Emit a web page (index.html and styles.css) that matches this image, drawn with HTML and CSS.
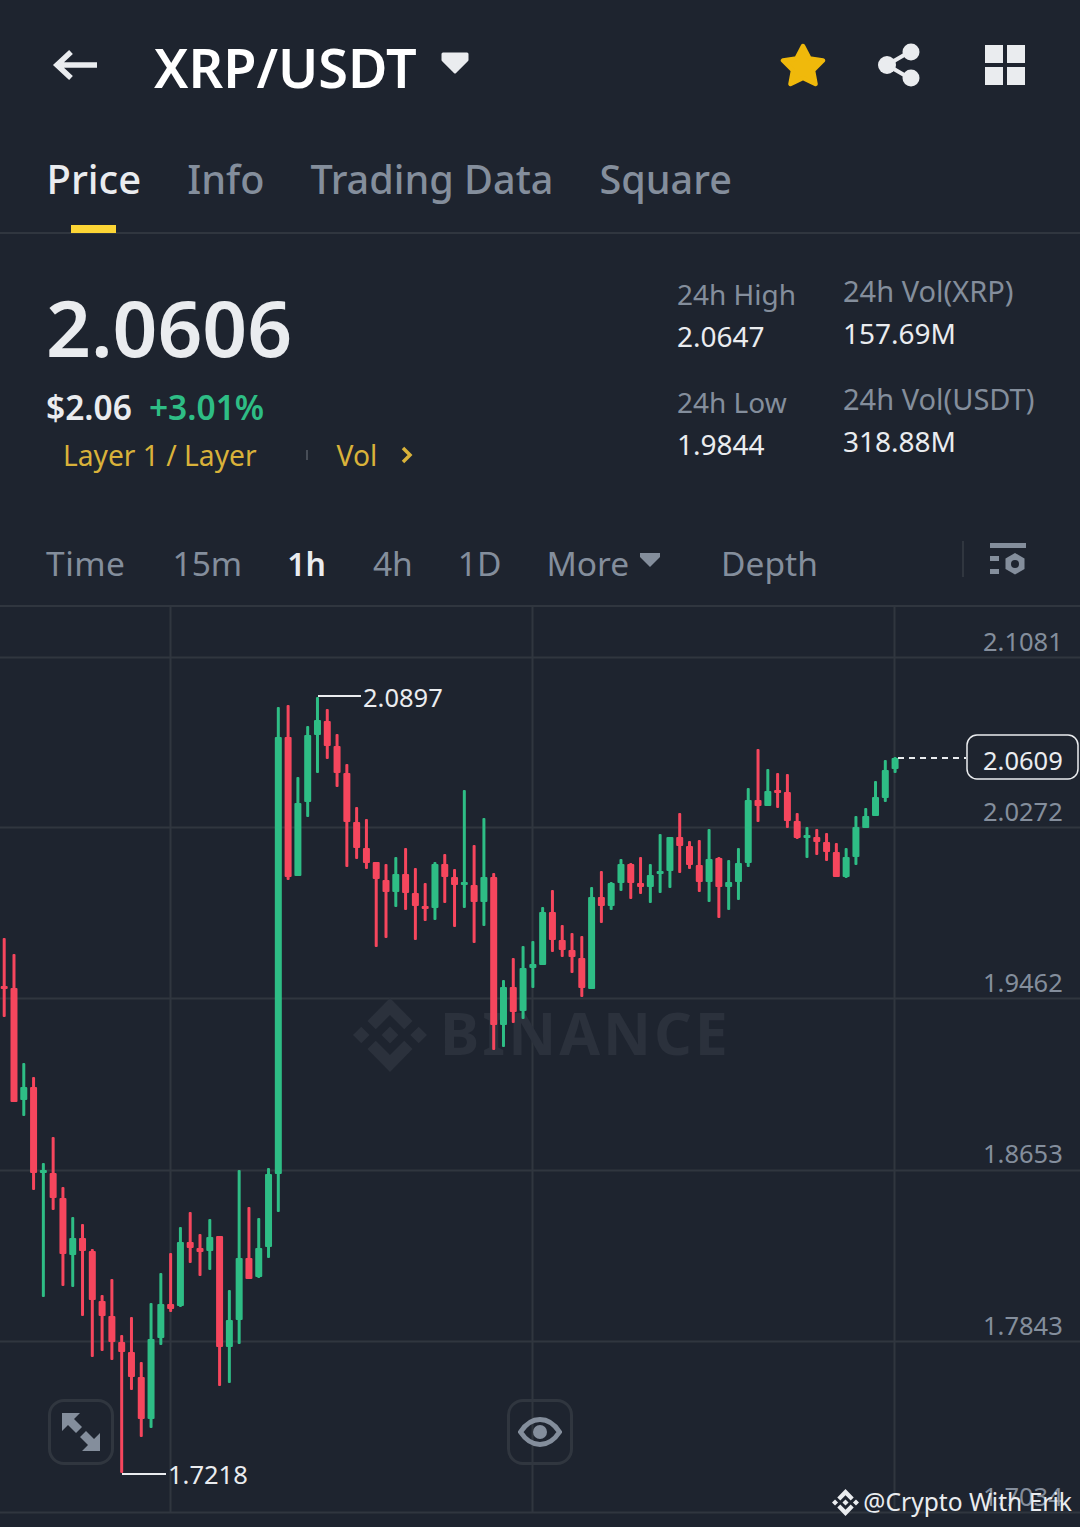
FILE: index.html
```html
<!DOCTYPE html>
<html lang="en">
<head>
    <meta charset="UTF-8">
    <meta name="viewport" content="width=device-width, initial-scale=1.0">
    <title>XRP/USDT</title>
    <link rel="stylesheet" href="styles.css">
</head>
<body>
    <header class="top-bar">
        <svg class="back-icon" viewBox="0 0 46 36"><path d="M19 5 L5 18 L19 31 M6 18 H45" fill="none" stroke="#eaecef" stroke-width="5.5"/></svg>
        <h1 class="pair">XRP/USDT</h1>
        <svg class="pair-caret" viewBox="0 0 28 22"><path d="M2 2 H26 V8 L14 20 L2 8 Z" fill="#eaecef" stroke="#eaecef" stroke-width="3" stroke-linejoin="round"/></svg>
        <div class="top-actions">
            <svg class="star-icon" viewBox="0 0 46 46"><path d="M23 4 L29.500 16.500 L43 18.500 L33 28.500 L35.500 42 L23 36 L10.500 42 L13 28.500 L3 18.500 L16.500 16.500 Z" fill="#f0b90b" stroke="#f0b90b" stroke-width="4.500" stroke-linejoin="round"/></svg>
            <svg class="share-icon" viewBox="0 0 44 46"><path d="M10 23 L34 9 M10 23 L34 37" stroke="#eaecef" stroke-width="4"/><circle cx="10" cy="23" r="9" fill="#eaecef"/><circle cx="34" cy="10" r="8.500" fill="#eaecef"/><circle cx="34" cy="36" r="8.500" fill="#eaecef"/></svg>
            <svg class="grid-icon" viewBox="0 0 40 40"><path d="M0 0 H18 V18 H0 Z M22 0 H40 V18 H22 Z M0 22 H18 V40 H0 Z M22 22 H40 V40 H22 Z" fill="#eaecef"/></svg>
        </div>
    </header>

    <nav class="tabs">
        <a class="tab tab-active">Price</a>
        <a class="tab">Info</a>
        <a class="tab">Trading Data</a>
        <a class="tab">Square</a>
    </nav>

    <section class="summary">
        <div class="summary-left">
            <div class="last-price">2.0606</div>
            <div class="price-change"><span class="usd">$2.06</span><span class="percent">+3.01%</span></div>
            <div class="tags">
                <span class="tag-name">Layer 1 / Layer</span>
                <span class="tag-divider"></span>
                <span class="tag-vol">Vol</span>
                <svg class="tag-chevron" viewBox="0 0 12 18"><path d="M2 2 L9 9 L2 16" fill="none" stroke="#d9b23a" stroke-width="3.500"/></svg>
            </div>
        </div>
        <div class="stats stats-first">
            <div class="stat-label">24h High</div>
            <div class="stat-value">2.0647</div>
            <div class="stat-label stat-gap">24h Low</div>
            <div class="stat-value">1.9844</div>
        </div>
        <div class="stats">
            <div class="stat-label">24h Vol(XRP)</div>
            <div class="stat-value">157.69M</div>
            <div class="stat-label stat-gap">24h Vol(USDT)</div>
            <div class="stat-value">318.88M</div>
        </div>
    </section>

    <nav class="intervals">
        <a class="interval interval-time">Time</a>
        <a class="interval">15m</a>
        <a class="interval interval-active">1h</a>
        <a class="interval">4h</a>
        <a class="interval interval-day">1D</a>
        <a class="interval interval-more">More
            <svg class="more-caret" viewBox="0 0 20 14"><path d="M0 0 H20 V4 L10 14 L0 4 Z" fill="#848e9c"/></svg>
        </a>
        <a class="interval">Depth</a>
        <span class="interval-divider"></span>
        <svg class="settings-icon" viewBox="0 0 36 36">
            <path d="M0 0 H36 V5 H0 Z M0 13 H9 V18 H0 Z M0 26 H9 V31 H0 Z" fill="#848e9c"/>
            <path d="M25 10 L34.500 15.500 V26 L25 31.500 L15.500 26 V15.500 Z" fill="#848e9c"/>
            <circle cx="25" cy="21" r="4" fill="#1e242f"/>
        </svg>
    </nav>

    <section class="chart">
        <svg id="chartCanvas" class="chart-canvas" viewBox="0 607 1080 920" width="1080" height="920"></svg>
        <button class="chart-button chart-expand">
            <svg viewBox="0 0 38 38" width="38" height="38"><path d="M0 0 H18 L12 6 L20 14 L14 20 L6 12 L0 18 Z M38 38 H20 L26 32 L18 24 L24 18 L32 26 L38 20 Z" fill="#848e9c"/></svg>
        </button>
        <button class="chart-button chart-eye">
            <svg viewBox="0 0 44 30" width="44" height="30"><path d="M2.500 15 C9 5 16 2.500 22 2.500 C28 2.500 35 5 41.500 15 C35 25 28 27.500 22 27.500 C16 27.500 9 25 2.500 15 Z" fill="none" stroke="#848e9c" stroke-width="5"/><circle cx="22" cy="15" r="7" fill="#848e9c"/></svg>
        </button>
        <div class="credit">
            <svg class="credit-logo" viewBox="0 0 126 126"><path d="M38.730 53.200 L63 28.940 L87.280 53.210 L101.400 39.090 L63 0 L24.610 39.090 Z M0 63 L14.120 48.880 L28.240 63 L14.120 77.120 Z M38.730 72.800 L63 97.060 L87.280 72.790 L101.400 86.910 L63 126 L24.610 86.900 Z M97.760 63 L111.880 48.880 L126 63 L111.880 77.120 Z M77.320 63 L63 48.680 L48.690 63 L63 77.320 Z" fill="#eaecef"/></svg>
            <span>@Crypto With Erik</span>
        </div>
    </section>

    <script src="chart.js"></script>
</body>
</html>
```

FILE: styles.css
```css
body {
    font-family: "Noto Sans", Roboto, sans-serif;
    background-color: #1e242f;
    color: #eaecef;
    margin: 0;
    width: 1080px;
    height: 1527px;
    overflow: hidden;
}

.top-bar {
    display: flex;
    align-items: center;
    height: 130px;
    padding: 0 55px 4px 52px;
}

.back-icon {
    width: 46px;
    height: 36px;
}

.pair {
    margin: 4px 0 0 56px;
    font-size: 54px;
    font-weight: 600;
    color: #ffffff;
}

.pair-caret {
    width: 28px;
    height: 22px;
    margin: 0 0 4px 24px;
}

.top-actions {
    display: flex;
    align-items: center;
    gap: 52px;
    margin-left: auto;
}

.star-icon {
    width: 46px;
    height: 46px;
    margin-right: -1px;
}

.share-icon {
    width: 44px;
    height: 46px;
}

.grid-icon {
    width: 40px;
    height: 40px;
    margin-left: 12px;
}

.tabs {
    display: flex;
    gap: 46px;
    height: 98px;
    padding-left: 46.5px;
    border-bottom: 2px solid #30363f;
}

.tab {
    font-size: 39.6px;
    font-weight: 500;
    line-height: 90px;
    color: #848e9c;
}

.tab-active {
    position: relative;
    font-size: 40px;
    color: #eaecef;
}

.tab-active::after {
    content: "";
    position: absolute;
    left: 24.5px;
    bottom: -1px;
    width: 45px;
    height: 8px;
    background-color: #fcd535;
}

.summary {
    display: flex;
    height: 301px;
}

.summary-left {
    width: 631px;
    padding-left: 46px;
}

.last-price {
    margin-top: 41px;
    font-size: 78.5px;
    line-height: 104px;
    font-weight: 600;
    color: #eaecef;
}

.price-change {
    display: flex;
    gap: 17px;
    margin-top: 5px;
    font-size: 33.5px;
    line-height: 46px;
    font-weight: 600;
}

.percent {
    color: #2ebd85;
}

.tags {
    display: flex;
    align-items: center;
    margin-left: 17px;
    margin-top: 4px;
    font-size: 28.2px;
    line-height: 42px;
    color: #d9b23a;
}

.tag-divider {
    width: 2px;
    height: 10px;
    margin: 0 29px 0 49px;
    background-color: #474d57;
}

.tag-chevron {
    width: 12px;
    height: 18px;
    margin-left: 24px;
}

.stats {
    padding-top: 37px;
}

.stats-first {
    width: 166px;
    padding-top: 40px;
}

.stats-first .stat-label {
    font-size: 28px;
}

.stat-label {
    font-size: 29px;
    line-height: 40px;
    color: #848e9c;
}

.stat-value {
    font-size: 28px;
    line-height: 44px;
    color: #eaecef;
}

.stat-gap {
    margin-top: 24px;
}

.intervals {
    display: flex;
    align-items: center;
    gap: 47px;
    height: 56px;
    padding: 0 0 14px 46px;
    border-bottom: 2px solid #30363f;
}

.interval {
    font-size: 33.5px;
    color: #848e9c;
}

.interval-time {
    letter-spacing: 0.5px;
}

.interval-active {
    margin-left: -2px;
    font-size: 32px;
    font-weight: 600;
    color: #eaecef;
}

.interval-day {
    margin-left: -2px;
}

.interval-more {
    display: flex;
    align-items: center;
    gap: 11px;
    margin-left: -2px;
    margin-right: 14px;
}

.more-caret {
    width: 20px;
    height: 14px;
    margin-bottom: 6px;
}

.interval-divider {
    width: 2px;
    height: 36px;
    margin: 0 0 8px auto;
    background-color: #30363f;
}

.settings-icon {
    width: 36px;
    height: 36px;
    margin: 0 54px 5px -21px;
}

.chart {
    position: relative;
    height: 920px;
}

.chart-canvas {
    display: block;
}

.price-label {
    font-size: 25.5px;
    fill: #848e9c;
}

.mark-label {
    font-size: 25.5px;
    fill: #eaecef;
}

.watermark {
    font-size: 59px;
    font-weight: 700;
    letter-spacing: 3px;
    fill: #2b313c;
}

.chart-button {
    position: absolute;
    top: 792px;
    display: flex;
    align-items: center;
    justify-content: center;
    width: 66px;
    height: 66px;
    padding: 0;
    background: none;
    border: 3px solid #30363f;
    border-radius: 16px;
}

.chart-expand {
    left: 48px;
}

.chart-eye {
    left: 507px;
}

.credit {
    position: absolute;
    right: 8px;
    top: 875px;
    display: flex;
    align-items: center;
    gap: 4px;
    font-size: 24.6px;
    line-height: 40px;
    color: #eaecef;
}

.credit-logo {
    width: 27px;
    height: 27px;
}
```

FILE: chart.js
```js
// [up or down, high, body top, body bottom, low] in page pixels
var candles = [
    ["d",938,986,989,1017],["d",954,988,1102,1102],["u",1063,1087,1100,1116],["d",1077,1087,1173,1190],
    ["u",1163,1170,1173,1297],["d",1137,1173,1198,1210],["d",1187,1198,1254,1286],["u",1217,1238,1255,1287],
    ["d",1224,1238,1251,1316],["d",1249,1251,1300,1357],["d",1295,1301,1316,1351],["d",1279,1316,1342,1360],
    ["d",1335,1342,1352,1473],["d",1317,1352,1377,1390],["d",1362,1377,1419,1437],["u",1303,1339,1419,1428],
    ["u",1273,1304,1338,1345],["d",1253,1304,1309,1312],["u",1227,1242,1306,1307],["d",1212,1242,1248,1263],
    ["d",1234,1248,1252,1276],["u",1219,1237,1251,1270],["d",1236,1236,1347,1386],["u",1290,1320,1347,1383],
    ["u",1170,1258,1320,1344],["d",1207,1258,1279,1279],["u",1218,1248,1277,1278],["u",1168,1174,1247,1258],
    ["u",707,737,1174,1212],["d",705,737,877,880],["u",777,803,876,876],["u",726,735,802,817],
    ["u",697,720,735,773],["d",709,721,746,759],["d",734,746,773,787],["d",764,773,822,867],
    ["d",807,822,848,859],["d",819,848,863,869],["d",862,862,879,947],["d",864,880,892,938],
    ["u",857,874,892,907],["d",848,874,893,910],["d",868,893,906,940],["d",883,906,909,921],
    ["u",862,864,908,920],["d",854,864,877,903],["d",869,877,885,927],["u",790,882,885,908],
    ["d",845,885,902,943],["u",818,877,902,926],["d",873,877,1025,1050],["u",980,987,1025,1047],
    ["d",958,987,1012,1023],["u",946,968,1011,1019],["u",941,964,968,988],["u",907,912,965,965],
    ["d",890,912,940,952],["d",925,940,950,957],["d",933,950,957,973],["d",936,958,988,997],
    ["u",887,897,989,989],["d",871,897,906,923],["u",882,883,906,910],["u",859,864,883,891],
    ["d",863,864,883,899],["d",857,883,887,894],["u",864,875,887,903],["u",834,871,874,893],
    ["u",837,837,871,888],["d",813,837,846,873],["d",841,846,865,869],["d",840,865,882,892],
    ["u",829,859,882,902],["d",857,858,887,918],["u",860,882,887,910],["u",848,863,882,900],
    ["u",788,800,863,867],["d",749,800,806,822],["u",769,791,806,806],["d",773,790,793,808],
    ["d",774,792,821,828],["d",813,821,838,839],["u",827,835,838,858],["d",829,837,842,855],
    ["d",833,842,852,861],["d",843,852,877,877],["u",848,857,877,878],["u",816,827,857,865],
    ["u",808,816,828,828],["u",781,797,816,816],["u",760,770,798,802],["u",757,758,769,773]
];

var svgNS = "http://www.w3.org/2000/svg";
var canvas = document.getElementById("chartCanvas");

// Helper to add one svg element to the chart
function add(tag, attrs, text) {
    var el = document.createElementNS(svgNS, tag);
    for (var key in attrs) {
        el.setAttribute(key, attrs[key]);
    }
    if (text) {
        el.textContent = text;
    }
    canvas.appendChild(el);
    return el;
}

function drawGrid() {
    [657.5, 827.5, 998.5, 1170.5, 1341.5, 1512.5].forEach(function(y) {
        add("line", { x1: 0, x2: 1080, y1: y, y2: y, stroke: "#30363f", "stroke-width": 2 });
    });
    [170.5, 532.5, 894.5].forEach(function(x) {
        add("line", { x1: x, x2: x, y1: 607, y2: 1512, stroke: "#30363f", "stroke-width": 2 });
    });
}

function drawWatermark() {
    var logo = "M38.730 53.200 L63 28.940 L87.280 53.210 L101.400 39.090 L63 0 L24.610 39.090 Z " +
        "M0 63 L14.120 48.880 L28.240 63 L14.120 77.120 Z " +
        "M38.730 72.800 L63 97.060 L87.280 72.790 L101.400 86.910 L63 126 L24.610 86.900 Z " +
        "M97.760 63 L111.880 48.880 L126 63 L111.880 77.120 Z " +
        "M77.320 63 L63 48.680 L48.690 63 L63 77.320 Z";
    add("path", { d: logo, fill: "#2b313c", transform: "translate(353 998) scale(0.587)" });
    add("text", { x: 440, y: 1055, "class": "watermark" }, "BINANCE");
}

function drawCandles() {
    candles.forEach(function(c, i) {
        var x = 4.2 + i * 9.79;
        var color = c[0] === "u" ? "#2ebd85" : "#f6465d";
        add("rect", { x: x - 1.5, y: c[1], width: 3, height: c[4] - c[1], rx: 1, fill: color });
        add("rect", { x: x - 3.5, y: c[2], width: 7, height: Math.max(c[3] - c[2], 3), rx: 1, fill: color });
    });
}

function drawLabels() {
    [["2.1081", 642], ["2.0272", 812], ["1.9462", 983], ["1.8653", 1154], ["1.7843", 1326], ["1.7034", 1497]].forEach(function(p) {
        add("text", { x: 983, y: p[1] + 9, "class": "price-label" }, p[0]);
    });

    // High and low marks
    add("path", { d: "M318 696 H361", fill: "none", stroke: "#eaecef", "stroke-width": 2 });
    add("text", { x: 363, y: 707, "class": "mark-label" }, "2.0897");
    add("path", { d: "M122 1474 H166", fill: "none", stroke: "#eaecef", "stroke-width": 2 });
    add("text", { x: 168, y: 1484, "class": "mark-label" }, "1.7218");

    // Current price box
    add("line", { x1: 898, x2: 966, y1: 758, y2: 758, stroke: "#eaecef", "stroke-width": 2, "stroke-dasharray": "6 5" });
    add("rect", { x: 967, y: 735, width: 111, height: 44, rx: 10, fill: "#1e242f", stroke: "#eaecef", "stroke-width": 1.5 });
    add("text", { x: 983, y: 770, "class": "mark-label" }, "2.0609");
}

drawGrid();
drawWatermark();
drawCandles();
drawLabels();
```
